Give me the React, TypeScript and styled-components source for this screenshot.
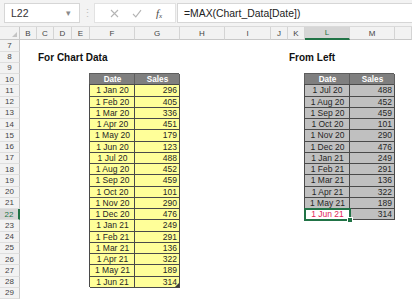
import React from 'react';
import styled, { createGlobalStyle, css } from 'styled-components';

type Kind = 'blank' | 'title' | 'head' | 'yellow' | 'gray' | 'pick';
type Align = 'left' | 'center' | 'right';
type CellData = { text: string; kind: Kind; align?: Align };

const COLS = ['B', 'C', 'D', 'E', 'F', 'G', 'H', 'I', 'J', 'K', 'L', 'M', 'N'];
const ROWS = Array.from({ length: 23 }, (_, i) => 7 + i);

const chartData: Array<[string, number]> = [
  ['1 Jan 20', 296],
  ['1 Feb 20', 405],
  ['1 Mar 20', 336],
  ['1 Apr 20', 451],
  ['1 May 20', 179],
  ['1 Jun 20', 123],
  ['1 Jul 20', 488],
  ['1 Aug 20', 452],
  ['1 Sep 20', 459],
  ['1 Oct 20', 101],
  ['1 Nov 20', 290],
  ['1 Dec 20', 476],
  ['1 Jan 21', 249],
  ['1 Feb 21', 291],
  ['1 Mar 21', 136],
  ['1 Apr 21', 322],
  ['1 May 21', 189],
  ['1 Jun 21', 314],
];

const fromLeft = chartData.slice(6);

const cells: Record<string, CellData> = {
  '8C': { text: 'For Chart Data', kind: 'title' },
  '8K': { text: 'From Left', kind: 'title' },
  '10F': { text: 'Date', kind: 'head', align: 'center' },
  '10G': { text: 'Sales', kind: 'head', align: 'center' },
  '10L': { text: 'Date', kind: 'head', align: 'center' },
  '10M': { text: 'Sales', kind: 'head', align: 'center' },
};

chartData.forEach(([date, sales], i) => {
  cells[`${11 + i}F`] = { text: date, kind: 'yellow', align: 'center' };
  cells[`${11 + i}G`] = { text: String(sales), kind: 'yellow', align: 'right' };
});

fromLeft.forEach(([date, sales], i) => {
  const last = i === fromLeft.length - 1;
  cells[`${11 + i}L`] = { text: date, kind: last ? 'pick' : 'gray', align: 'center' };
  cells[`${11 + i}M`] = { text: String(sales), kind: 'gray', align: 'right' };
});

const App = () => (
  <>
    <GlobalStyle />
    <Window>
      <FormulaBar>
        <NameBox>
          <span>L22</span>
          <DropArrow>▾</DropArrow>
        </NameBox>
        <Grip>⋮</Grip>
        <FuncButtons>
          <svg width="9" height="9" viewBox="0 0 9 9">
            <path d="M1 1 L8 8 M8 1 L1 8" stroke="#b4b4b4" strokeWidth="1.1" />
          </svg>
          <svg width="10" height="9" viewBox="0 0 10 9">
            <path d="M1 5 L3.8 7.8 L9 1.2" stroke="#b4b4b4" strokeWidth="1.1" fill="none" />
          </svg>
          <FxLabel>
            f<sub>x</sub>
          </FxLabel>
        </FuncButtons>
        <FormulaInput>=MAX(Chart_Data[Date])</FormulaInput>
      </FormulaBar>

      <Sheet>
        <Corner />
        {COLS.map((c) => (
          <ColHeader key={c} $active={c === 'L'}>
            {c === 'N' ? '' : c}
          </ColHeader>
        ))}

        {ROWS.map((r) => (
          <React.Fragment key={r}>
            <RowHeader $active={r === 22}>{r}</RowHeader>
            {COLS.map((c) => {
              const cell = cells[`${r}${c}`];
              return (
                <Cell
                  key={c}
                  $kind={cell?.kind ?? 'blank'}
                  $align={cell?.align ?? 'left'}
                  $handle={r === 28 && c === 'G'}
                >
                  {cell?.text}
                </Cell>
              );
            })}
          </React.Fragment>
        ))}
      </Sheet>
    </Window>
  </>
);

const GlobalStyle = createGlobalStyle`
  body {
    margin: 0;
    background: #ffffff;
    font-family: 'Liberation Sans', Arial, sans-serif;
  }
`;

const Window = styled.div`
  width: 412px;
  height: 299px;
  overflow: hidden;
  display: flex;
  flex-direction: column;
  background: #ffffff;
`;

const FormulaBar = styled.div`
  height: 28px;
  box-sizing: border-box;
  display: flex;
  align-items: flex-start;
  padding: 3px 0 0 4px;
  background: #f3f3f3;
  border-bottom: 1px solid #dadada;
`;

const NameBox = styled.div`
  width: 76px;
  height: 20px;
  box-sizing: border-box;
  display: flex;
  align-items: center;
  justify-content: space-between;
  padding: 0 8px 0 6px;
  background: #ffffff;
  border: 1px solid #d6d6d6;
  font-size: 10.5px;
  color: #333333;
`;

const DropArrow = styled.span`
  font-size: 9px;
  color: #8a8a8a;
`;

const Grip = styled.div`
  width: 14px;
  height: 20px;
  line-height: 20px;
  text-align: center;
  font-size: 11px;
  color: #c2c2c2;
`;

const FuncButtons = styled.div`
  width: 82px;
  height: 20px;
  box-sizing: border-box;
  display: flex;
  align-items: center;
  justify-content: space-around;
  padding: 0 6px 0 8px;
  background: #ffffff;
  border: 1px solid #e2e2e2;
`;

const FxLabel = styled.span`
  font-family: 'Liberation Serif', serif;
  font-style: italic;
  font-size: 11px;
  color: #4a4a4a;

  sub {
    font-size: 7px;
    vertical-align: -1px;
  }
`;

const FormulaInput = styled.div`
  flex: 1;
  height: 20px;
  box-sizing: border-box;
  margin-left: 1px;
  padding-left: 6px;
  line-height: 19px;
  background: #ffffff;
  border: 1px solid #d6d6d6;
  border-right: none;
  font-size: 10.4px;
  color: #222222;
`;

const Sheet = styled.div`
  display: grid;
  grid-template-columns: 20px 17px 17px 18px 18px 45px 45px 45px 46px 17px 17px 45px 45px 1fr;
  grid-template-rows: 13px;
  grid-auto-rows: 11.25px;
  background: #ffffff;
`;

const headerCell = css`
  box-sizing: border-box;
  background: #f2f2f2;
  color: #444444;
  font-size: 8px;
  overflow: hidden;
`;

const Corner = styled.div`
  ${headerCell};
  position: relative;
  border-right: 1px solid #c8c8c8;
  border-bottom: 1px solid #c8c8c8;

  &::after {
    content: '';
    position: absolute;
    right: 2px;
    bottom: 2px;
    border-left: 5px solid transparent;
    border-bottom: 5px solid #c4c4c4;
  }
`;

const ColHeader = styled.div<{ $active?: boolean }>`
  ${headerCell};
  display: flex;
  align-items: center;
  justify-content: center;
  border-right: 1px solid #d4d4d4;
  border-bottom: 1px solid #c8c8c8;

  ${(p) =>
    p.$active &&
    css`
      background: #d6d6d6;
      color: #217346;
      border-bottom: 2px solid #217346;
    `}
`;

const RowHeader = styled.div<{ $active?: boolean }>`
  ${headerCell};
  display: flex;
  align-items: center;
  justify-content: center;
  border-right: 1px solid #c8c8c8;
  border-bottom: 1px solid #dedede;

  ${(p) =>
    p.$active &&
    css`
      background: #d6d6d6;
      color: #217346;
      border-right: 2px solid #217346;
    `}
`;

const tableEdge = '#4a4a4a';

const kindStyles: Record<Kind, ReturnType<typeof css> | string> = {
  blank: '',
  title: css`
    font-size: 10px;
    font-weight: 700;
    color: #111111;
    padding-left: 1px;
    line-height: 12px;
  `,
  head: css`
    background: #7f7f7f;
    color: #ffffff;
    font-weight: 700;
    font-size: 8.2px;
    box-shadow: inset -1px -1px 0 #5e5e5e, -1px -1px 0 #5e5e5e;
  `,
  yellow: css`
    background: #ffff99;
    box-shadow: inset -1px -1px 0 ${tableEdge}, -1px -1px 0 ${tableEdge};
  `,
  gray: css`
    background: #c0c0c0;
    box-shadow: inset -1px -1px 0 ${tableEdge}, -1px -1px 0 ${tableEdge};
  `,
  pick: css`
    z-index: 2;
    background: #ffffff;
    color: #e3245a;
    outline: 2px solid #217346;
    outline-offset: -1px;

    &::after {
      content: '';
      position: absolute;
      right: -3px;
      bottom: -3px;
      width: 4px;
      height: 4px;
      background: #217346;
      border: 1px solid #ffffff;
    }
  `,
};

const Cell = styled.div<{ $kind: Kind; $align: Align; $handle?: boolean }>`
  position: relative;
  min-width: 0;
  padding: 0 3px;
  font-size: 8.5px;
  line-height: 11px;
  white-space: nowrap;
  color: #262626;
  text-align: ${(p) => p.$align};
  ${(p) => kindStyles[p.$kind]};

  ${(p) =>
    p.$handle &&
    css`
      &::after {
        content: '';
        position: absolute;
        right: 1px;
        bottom: 1px;
        border-left: 4px solid transparent;
        border-bottom: 4px solid #3b3b3b;
      }
    `}
`;

export default App;
